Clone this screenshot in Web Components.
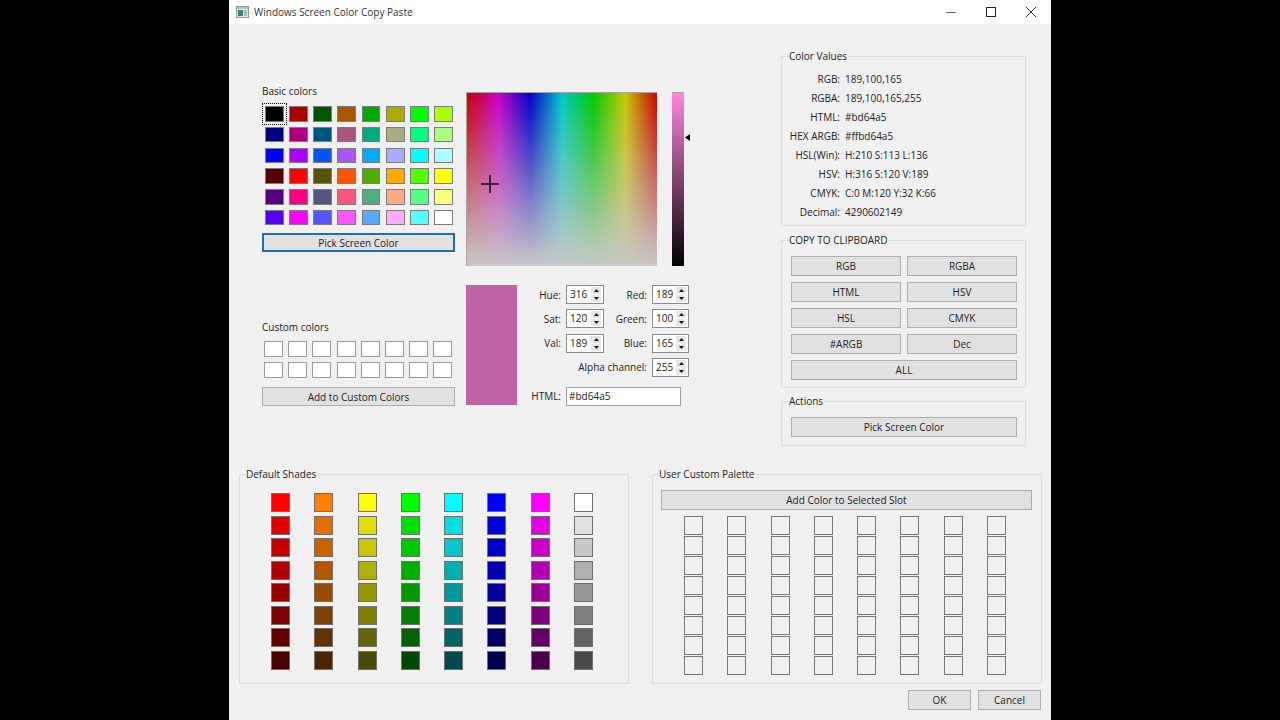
<!DOCTYPE html>
<html>
<head>
<meta charset="utf-8">
<title>Windows Screen Color Copy Paste</title>
<style>
  html, body { margin: 0; height: 100%; background: #000; }
  body { display: flex; justify-content: center; }
</style>
</head>
<body>
<app-window></app-window>
<script>
class QButton extends HTMLElement {
    constructor() {
        super();
        this.attachShadow({ mode: 'open' });
    }
    connectedCallback() {
        this.shadowRoot.innerHTML = `
            <style>
                :host {
                    display: flex;
                    align-items: center;
                    justify-content: center;
                    box-sizing: border-box;
                    height: 20px;
                    background: #e1e1e1;
                    border: 1px solid #adadad;
                    color: #222;
                }
                :host([focused]) {
                    border: 2px solid #1f6ea8;
                }
            </style>
            <slot></slot>
        `;
    }
}
customElements.define('q-button', QButton);

class GroupBox extends HTMLElement {
    constructor() {
        super();
        this.attachShadow({ mode: 'open' });
    }
    connectedCallback() {
        this.shadowRoot.innerHTML = `
            <style>
                :host {
                    display: block;
                    box-sizing: border-box;
                    border: 1px solid #dcdcdc;
                }
                .title {
                    display: block;
                    width: fit-content;
                    height: 14px;
                    line-height: 14px;
                    margin: -8px 0 0 var(--title-x, 7px);
                    padding: 0 1px 0 0;
                    background: #f0f0f0;
                    color: #222;
                }
            </style>
            <span class="title">${this.getAttribute('label')}</span>
            <slot></slot>
        `;
    }
}
customElements.define('group-box', GroupBox);

class SwatchGrid extends HTMLElement {
    constructor() {
        super();
        this.attachShadow({ mode: 'open' });
    }
    connectedCallback() {
        const colors = (this.getAttribute('colors') || '').split(' ').filter(Boolean);
        const count = Number(this.getAttribute('count')) || colors.length;
        const selected = this.getAttribute('selected');
        let cells = '';
        for (let i = 0; i < count; i++) {
            const bg = colors[i] || 'var(--cell-bg, #fff)';
            const cls = String(i) === selected ? 'cell sel' : 'cell';
            cells += `<i class="${cls}" style="background:${bg}"></i>`;
        }
        this.shadowRoot.innerHTML = `
            <style>
                :host {
                    display: grid;
                    grid-template-columns: repeat(8, var(--cell-w, 19px));
                    grid-auto-rows: var(--cell-h, 19px);
                    column-gap: var(--gap-x, 5px);
                    row-gap: var(--gap-y, 5px);
                }
                .cell {
                    display: block;
                    box-sizing: border-box;
                    border: 1px solid var(--cell-border, #7c7c7c);
                }
                .sel {
                    outline: 1px dotted #000;
                    outline-offset: 2px;
                }
            </style>
            ${cells}
        `;
    }
}
customElements.define('swatch-grid', SwatchGrid);

class SpinBox extends HTMLElement {
    constructor() {
        super();
        this.attachShadow({ mode: 'open' });
    }
    connectedCallback() {
        this.shadowRoot.innerHTML = `
            <style>
                :host {
                    display: flex;
                    box-sizing: border-box;
                    height: 19px;
                    background: #fff;
                    border: 1px solid #8a8a8a;
                    color: #222;
                }
                .val {
                    flex: 1;
                    padding-left: 3px;
                    line-height: 17px;
                }
                .btns {
                    display: flex;
                    flex-direction: column;
                    gap: 1px;
                    width: 10px;
                    margin: 1px 2px 1px 0;
                }
                .btns b {
                    flex: 1;
                    display: flex;
                    align-items: center;
                    justify-content: center;
                    background: #e6e6e6;
                }
                svg { display: block; }
            </style>
            <span class="val">${this.getAttribute('value')}</span>
            <span class="btns">
                <b><svg width="5" height="3" viewBox="0 0 5 3"><path d="M2.5 0L5 3H0z" fill="#111"/></svg></b>
                <b><svg width="5" height="3" viewBox="0 0 5 3"><path d="M0 0h5L2.5 3z" fill="#111"/></svg></b>
            </span>
        `;
    }
}
customElements.define('spin-box', SpinBox);

class TitleBar extends HTMLElement {
    constructor() {
        super();
        this.attachShadow({ mode: 'open' });
    }
    connectedCallback() {
        this.shadowRoot.innerHTML = `
            <style>
                :host {
                    display: flex;
                    align-items: center;
                    height: 24px;
                    background: #fff;
                    padding-left: 7px;
                    color: #333;
                }
                .name { margin-left: 5px; }
                .controls {
                    display: flex;
                    margin-left: auto;
                    align-items: center;
                }
                .controls span {
                    display: flex;
                    justify-content: center;
                    align-items: center;
                    width: 40px;
                    height: 22px;
                }
                svg { display: block; }
            </style>
            <svg width="13" height="12" viewBox="0 0 13 12">
                <rect x="0.5" y="0.5" width="12" height="11" fill="#dfe6e6" stroke="#8d9a9e"/>
                <rect x="1" y="1" width="11" height="2" fill="#b9c4c8"/>
                <rect x="2" y="4" width="5" height="6" fill="#3f8078"/>
                <rect x="8" y="4" width="3" height="6" fill="#a9bcc0"/>
            </svg>
            <span class="name">Windows Screen Color Copy Paste</span>
            <div class="controls">
                <span><svg width="10" height="10" viewBox="0 0 10 10"><path d="M0 5.5h10" stroke="#666" fill="none"/></svg></span>
                <span><svg width="10" height="10" viewBox="0 0 10 10"><rect x="0.5" y="0.5" width="9" height="9" stroke="#222" fill="none"/></svg></span>
                <span><svg width="10" height="10" viewBox="0 0 10 10"><path d="M0 0l10 10M10 0L0 10" stroke="#333" fill="none"/></svg></span>
            </div>
        `;
    }
}
customElements.define('title-bar', TitleBar);

class LeftPanel extends HTMLElement {
    constructor() {
        super();
        this.attachShadow({ mode: 'open' });
    }
    connectedCallback() {
        const basic = '#000000 #aa0000 #005500 #aa5500 #00aa00 #aaaa00 #00ff00 #aaff00 ' +
            '#00007f #aa007f #00557f #aa557f #00aa7f #aaaa7f #00ff7f #aaff7f ' +
            '#0000ff #aa00ff #0055ff #aa55ff #00aaff #aaaaff #00ffff #aaffff ' +
            '#550000 #ff0000 #555500 #ff5500 #55aa00 #ffaa00 #55ff00 #ffff00 ' +
            '#55007f #ff007f #55557f #ff557f #55aa7f #ffaa7f #55ff7f #ffff7f ' +
            '#5500ff #ff00ff #5555ff #ff55ff #55aaff #ffaaff #55ffff #ffffff';
        this.shadowRoot.innerHTML = `
            <style>
                :host {
                    display: flex;
                    flex-direction: column;
                    width: 193px;
                    padding-top: 60px;
                    color: #222;
                }
                .label { height: 14px; line-height: 14px; }
                .basic {
                    margin: 8px 0 0 3px;
                    --cell-w: 18.8px;
                    --cell-h: 15.5px;
                    --gap-x: 5.35px;
                    --gap-y: 5.3px;
                }
                .custom {
                    margin: 7px 0 0 2px;
                    --cell-w: 19px;
                    --cell-h: 16px;
                    --gap-x: 5.2px;
                    --gap-y: 5px;
                    --cell-border: #9a9a9a;
                }
                q-button { height: 19px; }
                .pick { margin-top: 8px; padding-top: 1px; }
                .add { margin-top: 9px; }
                .custom-label { margin-top: 68px; }
            </style>
            <div class="label">Basic colors</div>
            <swatch-grid class="basic" colors="${basic}" selected="0"></swatch-grid>
            <q-button class="pick" focused>Pick Screen Color</q-button>
            <div class="label custom-label">Custom colors</div>
            <swatch-grid class="custom" count="16"></swatch-grid>
            <q-button class="add">Add to Custom Colors</q-button>
        `;
    }
}
customElements.define('left-panel', LeftPanel);

class ColorField extends HTMLElement {
    constructor() {
        super();
        this.attachShadow({ mode: 'open' });
    }
    connectedCallback() {
        this.shadowRoot.innerHTML = `
            <style>
                :host {
                    display: flex;
                    gap: 15px;
                    height: 174px;
                }
                .field {
                    position: relative;
                    box-sizing: border-box;
                    width: 191px;
                    border-left: 1px solid #a3a3a3;
                    border-top: 1px solid #a3a3a3;
                    background:
                        linear-gradient(to bottom, rgba(200,200,200,0), rgb(200,200,200)),
                        linear-gradient(to right, rgb(200,0,0), rgb(200,0,200), rgb(0,0,200), rgb(0,200,200), rgb(0,200,0), rgb(200,200,0), rgb(200,0,0));
                }
                .cross { position: absolute; left: 14px; top: 82px; }
                .strip {
                    position: relative;
                    box-sizing: border-box;
                    width: 12px;
                    border-top: 1px solid #a3a3a3;
                    background: linear-gradient(to bottom, #ff86dd, #000);
                }
                .arrow { position: absolute; left: 13px; top: 41px; }
                svg { display: block; }
            </style>
            <div class="field">
                <svg class="cross" width="18" height="18" viewBox="0 0 18 18"><path d="M0 9h18M9 0v18" stroke="#111" stroke-width="1.5" fill="none"/></svg>
            </div>
            <div class="strip">
                <svg class="arrow" width="5" height="7" viewBox="0 0 5 7"><path d="M0 3.5L5 0v7z" fill="#000"/></svg>
            </div>
        `;
    }
}
customElements.define('color-field', ColorField);

class ColorForm extends HTMLElement {
    constructor() {
        super();
        this.attachShadow({ mode: 'open' });
    }
    connectedCallback() {
        this.shadowRoot.innerHTML = `
            <style>
                :host {
                    display: flex;
                    margin-top: 19px;
                    color: #222;
                }
                .preview {
                    width: 51px;
                    height: 120px;
                    background: #bd64a5;
                }
                .form {
                    display: grid;
                    grid-template-columns: 44px 38px 38px 37px;
                    grid-template-rows: 19px 19px 19px 19px 24px;
                    column-gap: 5px;
                    row-gap: 5.3px;
                    align-items: center;
                }
                .form label { text-align: right; white-space: nowrap; }
                .form .wide { grid-column: 1 / 4; }
                .html-label { align-self: end; line-height: 19px; }
                .html {
                    grid-column: 2 / 5;
                    align-self: end;
                    box-sizing: border-box;
                    width: 115px;
                    height: 19px;
                    line-height: 17px;
                    padding-left: 2px;
                    background: #fff;
                    border: 1px solid #a0a0a0;
                }
            </style>
            <div class="preview"></div>
            <div class="form">
                <label>Hue:</label><spin-box value="316"></spin-box><label>Red:</label><spin-box value="189"></spin-box>
                <label>Sat:</label><spin-box value="120"></spin-box><label>Green:</label><spin-box value="100"></spin-box>
                <label>Val:</label><spin-box value="189"></spin-box><label>Blue:</label><spin-box value="165"></spin-box>
                <label class="wide">Alpha channel:</label><spin-box value="255"></spin-box>
                <label class="html-label">HTML:</label><div class="html">#bd64a5</div>
            </div>
        `;
    }
}
customElements.define('color-form', ColorForm);

class ValuesPanel extends HTMLElement {
    constructor() {
        super();
        this.attachShadow({ mode: 'open' });
    }
    connectedCallback() {
        const rows = [
            ['RGB:', '189,100,165'],
            ['RGBA:', '189,100,165,255'],
            ['HTML:', '#bd64a5'],
            ['HEX ARGB:', '#ffbd64a5'],
            ['HSL(Win):', 'H:210 S:113 L:136'],
            ['HSV:', 'H:316 S:120 V:189'],
            ['CMYK:', 'C:0 M:120 Y:32 K:66'],
            ['Decimal:', '4290602149']
        ].map(r => `<span class="k">${r[0]}</span><span>${r[1]}</span>`).join('');
        this.shadowRoot.innerHTML = `
            <style>
                :host {
                    display: flex;
                    flex-direction: column;
                    gap: 14px;
                    width: 245px;
                    padding-top: 32px;
                    color: #222;
                }
                .values {
                    display: grid;
                    grid-template-columns: 58px 1fr;
                    grid-auto-rows: 19px;
                    column-gap: 5px;
                    align-items: center;
                    padding: 6px 0 4px;
                }
                .k { text-align: right; white-space: nowrap; }
                .copy {
                    display: grid;
                    grid-template-columns: 110px 110px;
                    grid-auto-rows: 20px;
                    gap: 6px;
                    padding: 9px 9px 7px 9px;
                }
                .all { grid-column: 1 / 3; }
                .action-box { margin-top: -1px; }
                .actions { padding: 9px 8px 8px 9px; }
            </style>
            <group-box label="Color Values"><div class="values">${rows}</div></group-box>
            <group-box label="COPY TO CLIPBOARD">
                <div class="copy">
                    <q-button>RGB</q-button><q-button>RGBA</q-button>
                    <q-button>HTML</q-button><q-button>HSV</q-button>
                    <q-button>HSL</q-button><q-button>CMYK</q-button>
                    <q-button>#ARGB</q-button><q-button>Dec</q-button>
                    <q-button class="all">ALL</q-button>
                </div>
            </group-box>
            <group-box class="action-box" label="Actions">
                <div class="actions"><q-button>Pick Screen Color</q-button></div>
            </group-box>
        `;
    }
}
customElements.define('values-panel', ValuesPanel);

class ShadesPanel extends HTMLElement {
    constructor() {
        super();
        this.attachShadow({ mode: 'open' });
    }
    connectedCallback() {
        const bases = [[255,0,0],[255,128,0],[255,255,0],[0,255,0],[0,255,255],[0,0,255],[255,0,255],[255,255,255]];
        const levels = [255, 224, 200, 176, 152, 128, 100, 74];
        const colors = [];
        levels.forEach(l => bases.forEach(b => {
            colors.push('rgb(' + b.map(v => Math.round(v * l / 255)).join(',') + ')');
        }));
        this.shadowRoot.innerHTML = `
            <style>
                :host { display: block; width: 390px; height: 210px; }
                group-box { height: 100%; --title-x: 6px; }
                swatch-grid {
                    margin: 12px 0 0 31px;
                    --gap-x: 24.3px;
                    --gap-y: 3.5px;
                    --cell-border: #6f6f6f;
                }
            </style>
            <group-box label="Default Shades">
                <swatch-grid colors="${colors.join(' ')}"></swatch-grid>
            </group-box>
        `;
    }
}
customElements.define('shades-panel', ShadesPanel);

class PalettePanel extends HTMLElement {
    constructor() {
        super();
        this.attachShadow({ mode: 'open' });
    }
    connectedCallback() {
        this.shadowRoot.innerHTML = `
            <style>
                :host { display: block; width: 390px; height: 210px; }
                group-box { height: 100%; --title-x: 6px; }
                q-button { margin: 9px 9px 0 8px; }
                swatch-grid {
                    margin: 6px 0 0 31px;
                    --gap-x: 24.3px;
                    --gap-y: 1px;
                    --cell-border: #777;
                    --cell-bg: #f0f0f0;
                }
            </style>
            <group-box label="User Custom Palette">
                <q-button>Add Color to Selected Slot</q-button>
                <swatch-grid count="64"></swatch-grid>
            </group-box>
        `;
    }
}
customElements.define('palette-panel', PalettePanel);

class AppWindow extends HTMLElement {
    constructor() {
        super();
        this.attachShadow({ mode: 'open' });
    }
    connectedCallback() {
        this.shadowRoot.innerHTML = `
            <style>
                :host {
                    display: flex;
                    flex-direction: column;
                    width: 822px;
                    height: 720px;
                    background: #f0f0f0;
                    font: 10px "Open Sans", sans-serif;
                    color: #222;
                }
                .top {
                    display: flex;
                    height: 450px;
                    padding: 0 25px 0 33px;
                }
                .mid {
                    margin-left: 11px;
                    padding-top: 68px;
                }
                values-panel { margin-left: auto; }
                .bottom {
                    display: flex;
                    gap: 23px;
                    padding-left: 10px;
                }
                .footer {
                    display: flex;
                    justify-content: flex-end;
                    gap: 7px;
                    padding: 6px 10px 0 0;
                }
                .footer q-button { width: 63px; }
            </style>
            <title-bar></title-bar>
            <div class="top">
                <left-panel></left-panel>
                <div class="mid">
                    <color-field></color-field>
                    <color-form></color-form>
                </div>
                <values-panel></values-panel>
            </div>
            <div class="bottom">
                <shades-panel></shades-panel>
                <palette-panel></palette-panel>
            </div>
            <div class="footer">
                <q-button>OK</q-button>
                <q-button>Cancel</q-button>
            </div>
        `;
    }
}
customElements.define('app-window', AppWindow);
</script>
</body>
</html>
